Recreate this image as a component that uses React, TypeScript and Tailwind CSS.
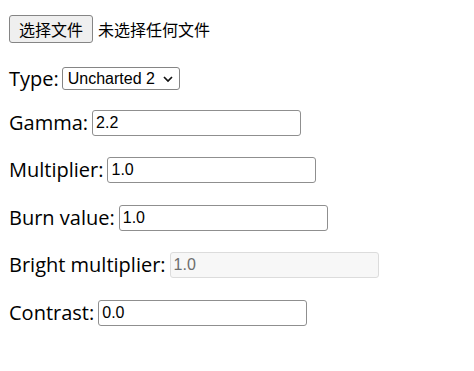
import { useState } from "react";

// Tone mapping settings form: file picker, operator type and numeric params.
const fields = [
  { label: "Gamma:", value: "2.2", mt: "mt-[20px]" },
  { label: "Multiplier:", value: "1.0", mt: "mt-[21px]" },
  { label: "Burn value:", value: "1.0", mt: "mt-[22px]" },
  { label: "Bright multiplier:", value: "1.0", mt: "mt-[21px]", disabled: true },
  { label: "Contrast:", value: "0.0", mt: "mt-[22px]" },
];

export default function App() {
  const [type, setType] = useState("uncharted2");

  return (
    <div className="min-h-screen bg-white pl-[9px] pt-[15px] text-black font-['Open_Sans','Noto_Sans',sans-serif]">
      <div className="flex h-[28px] items-center gap-[5px] font-['Noto_Sans_CJK_SC',sans-serif] text-[16px]">
        <button className="h-[28px] rounded-[3px] border border-[#858585] bg-[#efefef] px-[9px] leading-none">
          选择文件
        </button>
        <span>未选择任何文件</span>
      </div>

      <div className="mt-[24px] flex h-[23px] items-center gap-[3px] text-[20px] leading-[28px]">
        <span>Type:</span>
        <div className="relative flex items-center">
          <select
            value={type}
            onChange={(e) => setType(e.target.value)}
            className="h-[23px] w-[118px] appearance-none rounded-[3px] border border-[#858585] bg-white pl-[5px] text-[16px] leading-none font-['Liberation_Sans',Arial,sans-serif]"
          >
            <option value="uncharted2">Uncharted 2</option>
            <option value="reinhard">Reinhard</option>
            <option value="aces">ACES</option>
          </select>
          <svg
            className="pointer-events-none absolute right-[7px] top-1/2 -translate-y-1/2"
            width="10"
            height="7"
            viewBox="0 0 10 7"
            fill="none"
          >
            <path d="M1 1.5l4 4 4-4" stroke="#111" strokeWidth="1.7" />
          </svg>
        </div>
      </div>

      {fields.map((f) => (
        <div
          key={f.label}
          className={`${f.mt} flex h-[26px] items-center gap-[4px] text-[20px] leading-[28px]`}
        >
          <span>{f.label}</span>
          <input
            type="text"
            defaultValue={f.value}
            disabled={f.disabled}
            className={`h-[26px] w-[209px] rounded-[3px] border px-[3px] text-[16px] font-['Liberation_Sans',Arial,sans-serif] ${
              f.disabled
                ? "border-[#dcdcdc] bg-[#f7f7f7] text-[#6d6d6d]"
                : "border-[#8f8f8f] bg-white text-black"
            }`}
          />
        </div>
      ))}
    </div>
  );
}
